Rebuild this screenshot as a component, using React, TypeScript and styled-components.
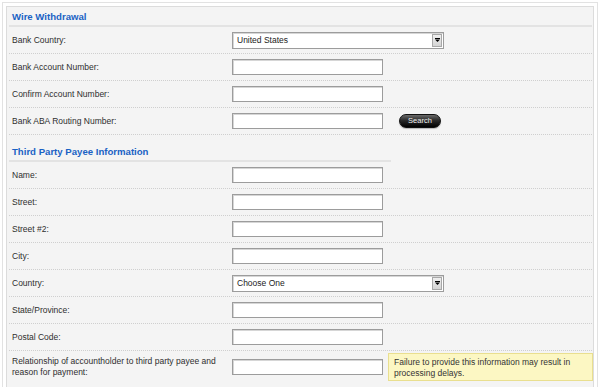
import React from "react";
import styled, { createGlobalStyle } from "styled-components";

const Global = createGlobalStyle`
  html, body { margin: 0; padding: 0; background: #ffffff; }
  body { font-family: "Liberation Sans", Arial, sans-serif; color: #333; }
`;

const Frame = styled.div`
  margin: 2px;
  border: 1px solid #e2e2e2;
  padding: 3px;
  min-height: 400px;
  box-sizing: border-box;
`;

const Panel = styled.div`
  border: 1px solid #dcdcdc;
  background: #f4f4f4;
  padding: 0 1px 0 2px;
  min-height: 400px;
  box-sizing: border-box;
`;

const SectionHeader = styled.div<{ $first?: boolean; $lineWidth?: number }>`
  display: flex;
  align-items: ${(p) => (p.$first ? "center" : "flex-end")};
  height: ${(p) => (p.$first ? "20px" : "27px")};
  padding: ${(p) => (p.$first ? "0 0 0 3px" : "0 0 2px 3px")};
  box-sizing: border-box;
  border-bottom: 2px solid #e3e3e3;
  width: ${(p) => (p.$lineWidth ? `${p.$lineWidth}px` : "auto")};
`;

const Title = styled.h2`
  margin: 0;
  font-size: 9.6px;
  line-height: 13px;
  font-weight: bold;
  color: #1a62c4;
`;

const Row = styled.div<{ $last?: boolean; $h?: number }>`
  display: grid;
  grid-template-columns: 220px auto 1fr;
  align-items: center;
  height: ${(p) => p.$h ?? 26}px;
  padding-left: 3px;
  border-bottom: ${(p) => (p.$last ? "none" : "1px dotted #cfcfcf")};
`;

const Label = styled.label`
  font-size: 8.5px;
  line-height: 11px;
  color: #2e2e2e;
`;

const TextInput = styled.input`
  width: 151px;
  height: 16px;
  box-sizing: border-box;
  border: 1px solid #9c9c9c;
  box-shadow: inset 1px 1px 0 #d6d6d6;
  background: #fff;
  padding: 0 3px;
  margin: 0;
  font-family: inherit;
  font-size: 8.5px;
`;

const SelectBox = styled.div`
  position: relative;
  width: 212px;
  height: 17px;
  box-sizing: border-box;
  border: 1px solid #9c9c9c;
  box-shadow: inset 1px 1px 0 #d6d6d6;
  background: #fff;
  display: flex;
  align-items: center;
  padding-left: 4px;
  font-size: 8.5px;
  color: #222;
`;

const SelectButton = styled.div`
  position: absolute;
  right: 1px;
  top: 1px;
  bottom: 1px;
  width: 10px;
  background: linear-gradient(#efefef, #d4d4d4);
  border: 1px solid #a8a8a8;
  box-sizing: border-box;
  display: flex;
  align-items: center;
  justify-content: center;
`;

const SearchButton = styled.button`
  margin-left: 16px;
  width: 42px;
  height: 14px;
  border-radius: 7px;
  border: 1px solid #111;
  background: linear-gradient(#6a6a6a 0%, #2a2a2a 45%, #000 100%);
  color: #f0f0f0;
  font-family: inherit;
  font-size: 7.5px;
  padding: 0;
  line-height: 12px;
  box-shadow: 0 1px 1px rgba(0, 0, 0, 0.25);
`;

const Field = styled.div`
  display: flex;
  align-items: center;
`;

const Notice = styled.div`
  margin-left: 5px;
  margin-right: -1px;
  height: 28px;
  box-sizing: border-box;
  background: #fcf7c3;
  border: 1px solid #e9df8f;
  padding: 3px 5px 0 5px;
  font-size: 8.5px;
  line-height: 11px;
  color: #333;
`;

const Arrow = () => (
  <svg width="5" height="4" viewBox="0 0 5 4">
    <rect x="0" y="0" width="5" height="1" fill="#000" />
    <polygon points="0,1.5 5,1.5 2.5,4" fill="#000" />
  </svg>
);

const Select = ({ value }: { value: string }) => (
  <SelectBox>
    {value}
    <SelectButton>
      <Arrow />
    </SelectButton>
  </SelectBox>
);

const payeeFields = ["Name:", "Street:", "Street #2:", "City:"];
const payeeFields2 = ["State/Province:", "Postal Code:"];

export default function App() {
  return (
    <>
      <Global />
      <Frame>
        <Panel>
          <SectionHeader $first>
            <Title>Wire Withdrawal</Title>
          </SectionHeader>
          <Row>
            <Label>Bank Country:</Label>
            <Select value="United States" />
          </Row>
          <Row>
            <Label>Bank Account Number:</Label>
            <TextInput />
          </Row>
          <Row>
            <Label>Confirm Account Number:</Label>
            <TextInput />
          </Row>
          <Row>
            <Label>Bank ABA Routing Number:</Label>
            <Field>
              <TextInput />
              <SearchButton>Search</SearchButton>
            </Field>
          </Row>
          <SectionHeader $lineWidth={382}>
            <Title>Third Party Payee Information</Title>
          </SectionHeader>
          {payeeFields.map((f) => (
            <Row key={f}>
              <Label>{f}</Label>
              <TextInput />
            </Row>
          ))}
          <Row>
            <Label>Country:</Label>
            <Select value="Choose One" />
          </Row>
          {payeeFields2.map((f) => (
            <Row key={f}>
              <Label>{f}</Label>
              <TextInput />
            </Row>
          ))}
          <Row $last $h={32}>
            <Label>
              Relationship of accountholder to third party payee and reason for
              payment:
            </Label>
            <TextInput />
            <Notice>
              Failure to provide this information may result in processing
              delays.
            </Notice>
          </Row>
        </Panel>
      </Frame>
    </>
  );
}
